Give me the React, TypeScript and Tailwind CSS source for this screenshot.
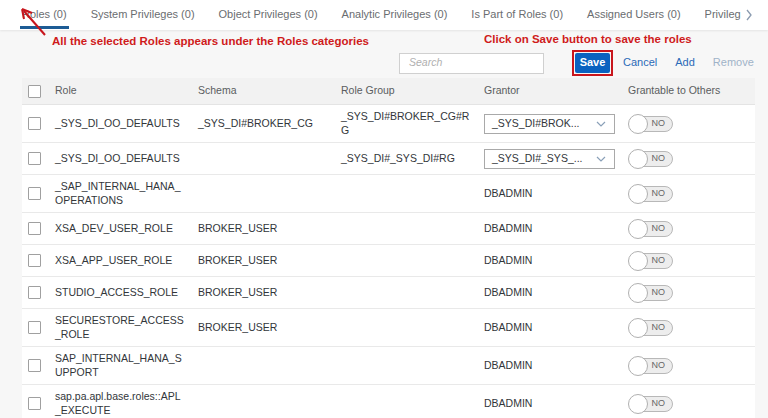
import React from 'react';

const tabs = [
  'Roles (0)',
  'System Privileges (0)',
  'Object Privileges (0)',
  'Analytic Privileges (0)',
  'Is Part of Roles (0)',
  'Assigned Users (0)',
  'Privileg',
];

type Row = {
  role: string[];
  schema?: string;
  group?: string[];
  grantor?: string;
  select?: string;
};

const rows: Row[] = [
  { role: ['_SYS_DI_OO_DEFAULTS'], schema: '_SYS_DI#BROKER_CG', group: ['_SYS_DI#BROKER_CG#R', 'G'], select: '_SYS_DI#BROK...' },
  { role: ['_SYS_DI_OO_DEFAULTS'], group: ['_SYS_DI#_SYS_DI#RG'], select: '_SYS_DI#_SYS_...' },
  { role: ['_SAP_INTERNAL_HANA_', 'OPERATIONS'], grantor: 'DBADMIN' },
  { role: ['XSA_DEV_USER_ROLE'], schema: 'BROKER_USER', grantor: 'DBADMIN' },
  { role: ['XSA_APP_USER_ROLE'], schema: 'BROKER_USER', grantor: 'DBADMIN' },
  { role: ['STUDIO_ACCESS_ROLE'], schema: 'BROKER_USER', grantor: 'DBADMIN' },
  { role: ['SECURESTORE_ACCESS', '_ROLE'], schema: 'BROKER_USER', grantor: 'DBADMIN' },
  { role: ['SAP_INTERNAL_HANA_S', 'UPPORT'], grantor: 'DBADMIN' },
  { role: ['sap.pa.apl.base.roles::APL', '_EXECUTE'], grantor: 'DBADMIN' },
];

const grid = 'grid grid-cols-[26px_143px_143px_143px_144px_1fr]';

function Checkbox() {
  return <div className="w-[13px] h-[13px] border border-[#a0a0a0] bg-white rounded-[1px] ml-[6px]" />;
}

function Toggle() {
  return (
    <div className="relative w-[45px] h-[20px]">
      <div className="absolute left-[8px] right-0 top-[2px] h-[16px] rounded-full border border-[#b8b8b8] bg-[#ededed] flex items-center justify-end pr-[7px]">
        <span className="text-[9px] text-[#666]">NO</span>
      </div>
      <div className="absolute left-0 top-0 w-[20px] h-[20px] rounded-full bg-white border border-[#b0b0b0]" />
    </div>
  );
}

function Select({ value }: { value: string }) {
  return (
    <div className="w-[131px] h-[20px] border border-[#a9a9a9] bg-white flex items-center justify-between pl-[7px] pr-[8px]">
      <span>{value}</span>
      <svg width="10" height="6" viewBox="0 0 10 6" fill="none" stroke="#8aa0b8" strokeWidth="1.2">
        <path d="M1 1 L5 5 L9 1" />
      </svg>
    </div>
  );
}

function Lines({ lines }: { lines?: string[] }) {
  if (!lines) return null;
  return (
    <div>
      {lines.map((l, i) => (
        <div key={i}>{l}</div>
      ))}
    </div>
  );
}

export default function App() {
  return (
    <div
      className="relative w-[768px] h-[418px] overflow-hidden bg-[#f7f7f7] text-[10.5px] leading-[13.5px] text-[#32363a]"
      style={{ fontFamily: '"Liberation Sans", Arial, sans-serif' }}
    >
      {/* tab bar */}
      <div className="h-[30px] bg-white flex items-stretch pl-[22px] shadow-[0_1px_2px_rgba(0,0,0,0.08)] relative">
        {tabs.map((t, i) => (
          <div
            key={t}
            className={`relative flex items-center text-[11px] text-[#6a6d70] ${i === 6 ? 'w-[36px] overflow-hidden whitespace-nowrap' : 'mr-[24px]'}`}
          >
            {t}
            {i === 0 && <div className="absolute left-[-2px] right-[-2px] bottom-[1px] h-[3px] bg-[#1d5c95]" />}
          </div>
        ))}
        <div className="flex items-center ml-[4px] text-[#8a9bb0]">
          <svg width="8" height="12" viewBox="0 0 8 12" fill="none" stroke="#8a9bb0" strokeWidth="1.3">
            <path d="M2 1 L6 6 L2 11" />
          </svg>
        </div>
      </div>

      {/* toolbar */}
      <div className="h-[48px] relative">
        <div className="absolute left-[52px] top-[5px] text-[11.5px] font-bold text-[#cf1b1b]">
          All the selected Roles appears under the Roles categories
        </div>
        <div className="absolute left-[484px] top-[3px] text-[11.5px] font-bold text-[#cf1b1b]">
          Click on Save button to save the roles
        </div>
        <div className="flex items-center pt-[20px] pl-[399px]">
          <div className="w-[145px] h-[21px] bg-white border border-[#d0d0d0] flex items-center pl-[9px] italic text-[#b0b0b0]">
            Search
          </div>
          <div className="ml-[28px] border-2 border-[#c8161d] p-[1px]">
            <div className="w-[35px] h-[20px] bg-[#0a62c0] rounded-[2px] flex items-center justify-center text-white font-bold text-[11px]">
              Save
            </div>
          </div>
          <span className="ml-[10px] text-[11px] text-[#2a6ab8]">Cancel</span>
          <span className="ml-[18px] text-[11px] text-[#2a6ab8]">Add</span>
          <span className="ml-[18px] text-[11px] text-[#9fb3c8]">Remove</span>
        </div>
      </div>

      {/* table */}
      <div className="ml-[22px] w-[733px]">
        <div className={`${grid} h-[27px] items-center bg-[#f2f2f2] text-[#5a5d60] border-b border-[#e4e4e4]`}>
          <Checkbox />
          <div className="pl-[7px]">Role</div>
          <div className="pl-[7px]">Schema</div>
          <div className="pl-[7px]">Role Group</div>
          <div className="pl-[7px]">Grantor</div>
          <div className="pl-[7px]">Grantable to Others</div>
        </div>
        {rows.map((r, i) => (
          <div key={i} className={`${grid} min-h-[32px] items-center bg-white border-b border-[#e9e9e9] py-[5px]`}>
            <Checkbox />
            <div className="pl-[7px]">
              <Lines lines={r.role} />
            </div>
            <div className="pl-[7px]">{r.schema}</div>
            <div className="pl-[7px]">
              <Lines lines={r.group} />
            </div>
            <div className="pl-[7px]">{r.select ? <Select value={r.select} /> : r.grantor}</div>
            <div className="pl-[7px]">
              <Toggle />
            </div>
          </div>
        ))}
      </div>

      {/* annotation arrow */}
      <svg className="absolute left-0 top-0 pointer-events-none" width="60" height="45" viewBox="0 0 60 45" fill="none">
        <path d="M45 35 L24 11" stroke="#c8161d" strokeWidth="2" />
        <path d="M22 9 L24 19 M22 9 L32 13" stroke="#c8161d" strokeWidth="2" />
      </svg>
    </div>
  );
}
